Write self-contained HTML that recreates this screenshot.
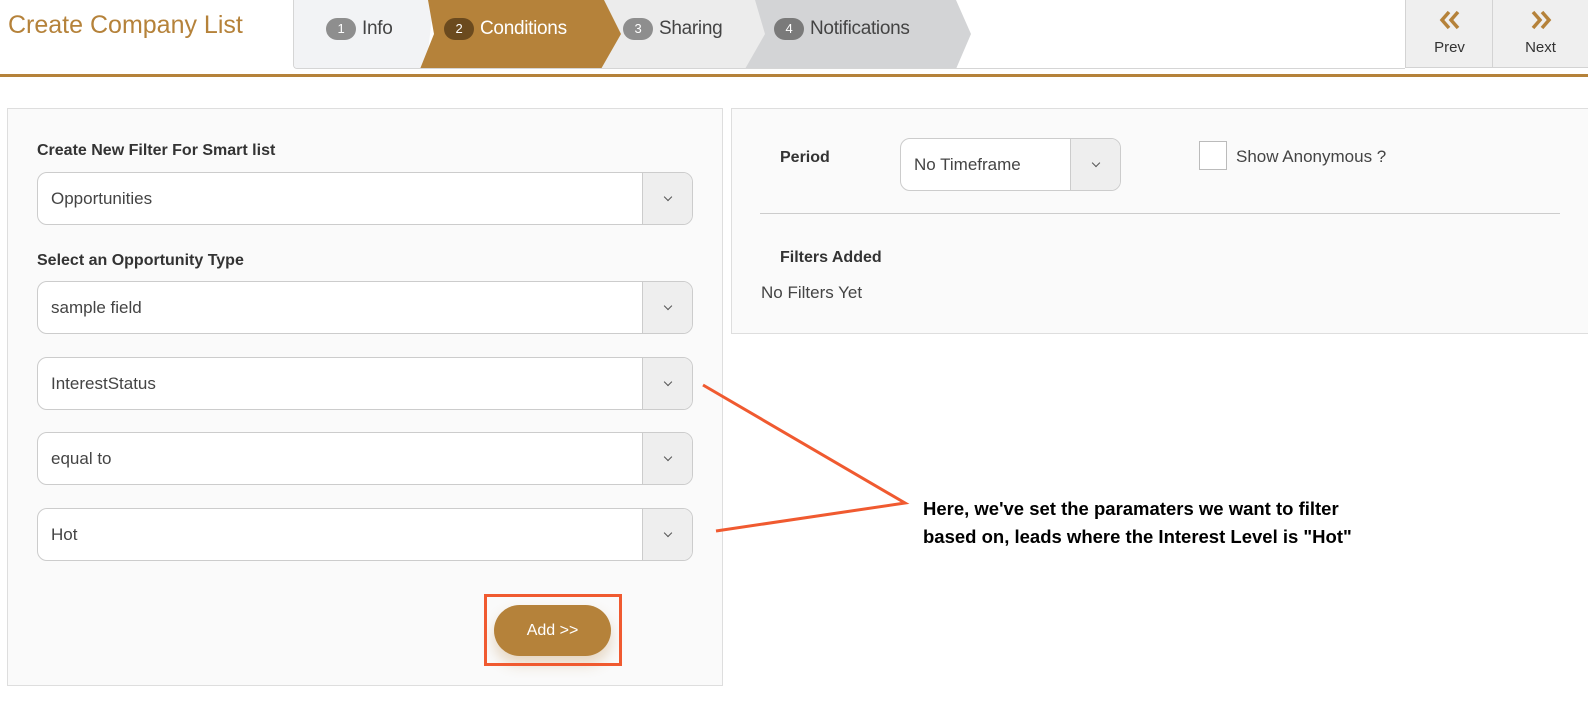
<!DOCTYPE html>
<html><head><meta charset="utf-8"><style>
*{box-sizing:border-box;margin:0;padding:0}
body{width:1588px;height:717px;background:#fff;font-family:"Liberation Sans",sans-serif;position:relative;overflow:hidden;color:#333}
.abs{position:absolute}
.title{left:8px;top:11px;font-size:25px;color:#b5823a}
.steps{left:293px;top:0;width:1112px;height:69px;background:#fff;border:1px solid #d5d5d5;border-top:none;border-right:none;border-radius:0 0 0 4px;overflow:hidden}
.num{display:inline-block;width:30px;height:22px;border-radius:11px;background:#8e8e8e;color:#fff;font-size:13px;text-align:center;line-height:22px;vertical-align:middle;margin-right:6px}
.st{position:absolute;top:18px;font-size:19px;color:#444;letter-spacing:-0.3px}
.gold{left:0;top:74px;width:1588px;height:3px;background:#b5823a}
.nav{top:0;height:68px;background:#efefef;border-left:1px solid #d3d3d3;border-bottom:1px solid #d3d3d3;text-align:center;font-size:15px;color:#333}
.panel{background:#fafafa;border:1px solid #dedede}
.lbl{font-weight:bold;font-size:16px;color:#333}
.sel{left:37px;width:656px;height:53px;background:#fff;border:1px solid #ccc;border-radius:10px;overflow:hidden;font-size:17px;color:#444}
.sel span{position:absolute;left:13px;top:16px}
.sel i{position:absolute;right:0;top:0;width:50px;height:100%;background:#eee;border-left:1px solid #ccc}
.sel i:after{content:"";position:absolute;left:22px;top:21px;width:5px;height:5px;border-right:1px solid #555;border-bottom:1px solid #555;transform:rotate(45deg)}
</style></head><body>
<div class="abs title">Create Company List</div>
<div class="abs steps">
<svg class="abs" style="left:0;top:0" width="1112" height="69">
<polygon points="0,0 140,0 132,69 0,69" fill="#f2f3f5"/>
<polygon points="300,0 463,0 481,34 460,69 300,69" fill="#ececec"/>
<polygon points="461,0 662,0 677,34 662,69 451,69 471,34" fill="#d3d4d6"/>
<polygon points="134,0 310,0 327,34 307,69 126,69 140,34" fill="#b5823a"/>
</svg>
<div class="st" style="left:32px"><span class="num">1</span>Info</div>
<div class="st" style="left:150px;color:#fff"><span class="num" style="background:#6b4a1e">2</span>Conditions</div>
<div class="st" style="left:329px"><span class="num">3</span>Sharing</div>
<div class="st" style="left:480px"><span class="num" style="background:#7a7a7a">4</span>Notifications</div>
</div>
<div class="abs nav" style="left:1405px;width:88px"><svg width="22" height="20" style="margin-top:10px" viewBox="0 0 22 20"><path d="M10 2 L3 10 L10 18 M19 2 L12 10 L19 18" fill="none" stroke="#b5823a" stroke-width="3.5"/></svg><div style="margin-top:5px">Prev</div></div>
<div class="abs nav" style="left:1492px;width:96px"><svg width="22" height="20" style="margin-top:10px" viewBox="0 0 22 20"><path d="M3 2 L10 10 L3 18 M12 2 L19 10 L12 18" fill="none" stroke="#b5823a" stroke-width="3.5"/></svg><div style="margin-top:5px">Next</div></div>
<div class="abs gold"></div>

<div class="abs panel" style="left:7px;top:108px;width:716px;height:578px"></div>
<div class="abs lbl" style="left:37px;top:142px">Create New Filter For Smart list</div>
<div class="abs sel" style="top:172px"><span>Opportunities</span><i></i></div>
<div class="abs lbl" style="left:37px;top:252px">Select an Opportunity Type</div>
<div class="abs sel" style="top:281px"><span>sample field</span><i></i></div>
<div class="abs sel" style="top:357px"><span>InterestStatus</span><i></i></div>
<div class="abs sel" style="top:432px"><span>equal to</span><i></i></div>
<div class="abs sel" style="top:508px"><span>Hot</span><i></i></div>
<div class="abs" style="left:494px;top:605px;width:117px;height:51px;border-radius:26px;background:#b5823a;color:#fff;font-size:16px;text-align:center;line-height:51px;box-shadow:0 8px 14px rgba(181,130,58,0.3)">Add &gt;&gt;</div>
<div class="abs" style="left:484px;top:594px;width:138px;height:72px;border:3px solid #f05a30"></div>

<div class="abs panel" style="left:731px;top:108px;width:870px;height:226px"></div>
<div class="abs lbl" style="left:780px;top:149px">Period</div>
<div class="abs sel" style="left:900px;top:138px;width:221px;height:53px"><span>No Timeframe</span><i></i></div>
<div class="abs" style="left:1199px;top:141px;width:28px;height:29px;border:1px solid #bbb;background:#fff"></div>
<div class="abs" style="left:1236px;top:147px;font-size:17px;color:#444">Show Anonymous ?</div>
<div class="abs" style="left:760px;top:213px;width:800px;height:1px;background:#ccc"></div>
<div class="abs lbl" style="left:780px;top:249px">Filters Added</div>
<div class="abs" style="left:761px;top:283px;font-size:17px;color:#444">No Filters Yet</div>

<svg class="abs" style="left:0;top:0" width="1588" height="717"><polyline points="703,385 905,503 716,531" fill="none" stroke="#f05a30" stroke-width="3"/></svg>
<div class="abs" style="left:923px;top:495px;font-size:18.5px;font-weight:bold;color:#000;line-height:28px">Here, we've set the paramaters we want to filter<br>based on, leads where the Interest Level is "Hot"</div>
</body></html>
